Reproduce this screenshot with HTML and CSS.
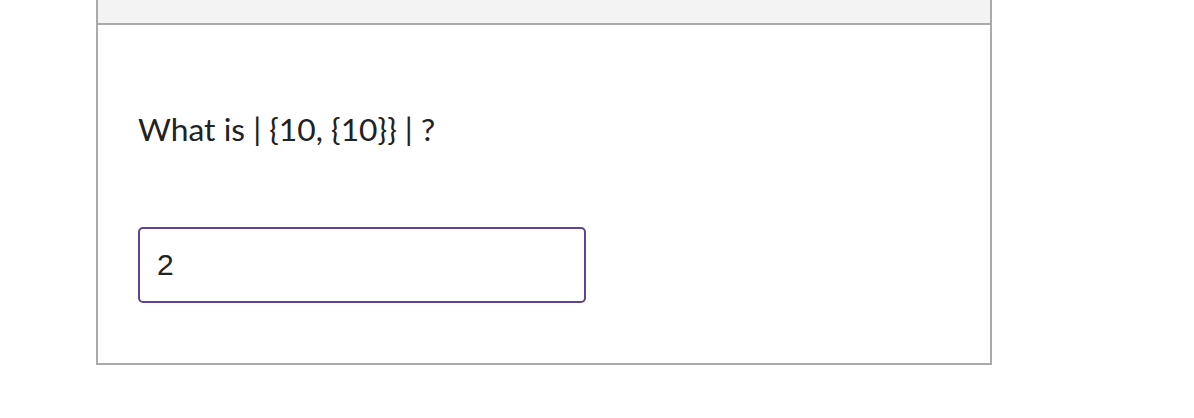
FILE: index.html
```html
<!DOCTYPE html>
<html>
<head>
<meta charset="utf-8">
<link rel="stylesheet" href="styles.css">
</head>
<body>
<div class="card">
  <div class="card-header"></div>
  <div class="card-body">
    <p class="question">What is | {10, {10}} | ?</p>
    <input class="answer" type="text" value="2">
  </div>
</div>
</body>
</html>
```
FILE: styles.css
```css
html, body {
  margin: 0;
  padding: 0;
  background: #ffffff;
}
.card {
  margin-left: 96px;
  width: 896px;
  box-sizing: border-box;
  border: 2px solid #aaaaaa;
  border-top: none;
  background: #ffffff;
}
.card-header {
  height: 23px;
  background: #f3f3f3;
  border-bottom: 2px solid #aaaaaa;
}
.card-body {
  padding: 84px 40px 60px 40px;
}
.question {
  margin: 0;
  font-family: Lato, "Liberation Sans", sans-serif;
  font-size: 31.8px;
  line-height: 40px;
  color: #222222;
}
.answer {
  display: block;
  margin-top: 78px;
  width: 448px;
  height: 76px;
  box-sizing: border-box;
  border: 2px solid #5e4494;
  border-radius: 5px;
  padding: 0 17px;
  font-family: "Liberation Sans", Arial, sans-serif;
  font-size: 30px;
  color: #222222;
  outline: none;
  background: #fff;
}
```
